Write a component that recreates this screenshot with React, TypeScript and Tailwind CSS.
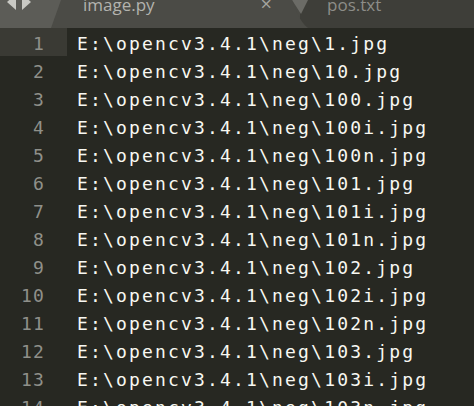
const lines = [
  '1.jpg',
  '10.jpg',
  '100.jpg',
  '100i.jpg',
  '100n.jpg',
  '101.jpg',
  '101i.jpg',
  '101n.jpg',
  '102.jpg',
  '102i.jpg',
  '102n.jpg',
  '103.jpg',
  '103i.jpg',
  '103n.jpg',
];

const mono = "font-['DejaVu_Sans_Mono',monospace]";

export default function App() {
  return (
    <div className="flex h-[406px] w-[474px] flex-col overflow-hidden bg-[#272822]">
      {/* Tab bar */}
      <div className="flex h-[28px] shrink-0 bg-[#3e3e39] font-['Open_Sans',sans-serif]">
        {/* nav arrows */}
        <div className="flex w-[50px] items-start bg-[#5c5c57] pl-[4px]">
          <svg width="30" height="18" viewBox="0 0 30 18" className="mt-[-6px]">
            <polygon points="12,0 12,16 3,8" fill="#c9c9c4" />
            <polygon points="18,0 18,16 27,8" fill="#c9c9c4" />
          </svg>
        </div>

        {/* image.py tab */}
        <div className="flex w-[250px] items-start bg-[#4b4b46]">
          <svg width="12" height="28" viewBox="0 0 12 28" className="shrink-0">
            <polygon points="0,0 11,0 1,28 0,28" fill="#5c5c57" />
          </svg>
          <span className="ml-[21px] mt-[-5px] text-[17px] leading-[20px] text-[#b3b3ae]">image.py</span>
          <span className="ml-auto mr-[28px] mt-[-6px] text-[20px] leading-[20px] text-[#a3a39e]">×</span>
        </div>

        {/* pos.txt tab */}
        <div className="flex flex-1 items-start">
          <svg width="24" height="28" viewBox="0 0 24 28" className="ml-[-8px] shrink-0">
            <path d="M0,0 L16,0 L9,14 Z" fill="#6b6b66" />
            <path d="M0,0 C4,10 8,22 16,28 L0,28 Z" fill="#4b4b46" />
          </svg>
          <span className="ml-[11px] mt-[-5px] text-[17px] leading-[20px] text-[#8d8d88]">pos.txt</span>
        </div>
      </div>

      {/* Editor */}
      <div className="flex flex-col">
        {lines.map((name, i) => (
          <div key={name} className={`flex h-[28px] items-center ${mono}`}>
            <div
              className={`flex h-full w-[67px] shrink-0 items-center justify-end pr-[22px] pt-[3px] text-[18px] tracking-[1.2px] text-[#8f908a] ${
                i === 0 ? 'bg-[#3a3a34]' : ''
              }`}
            >
              {i + 1}
            </div>
            <div className="pl-[10px] pt-[3px] text-[18px] tracking-[2.17px] whitespace-pre text-[#f8f8f2]">
              {`E:\\opencv3.4.1\\neg\\${name}`}
            </div>
          </div>
        ))}
      </div>
    </div>
  );
}
